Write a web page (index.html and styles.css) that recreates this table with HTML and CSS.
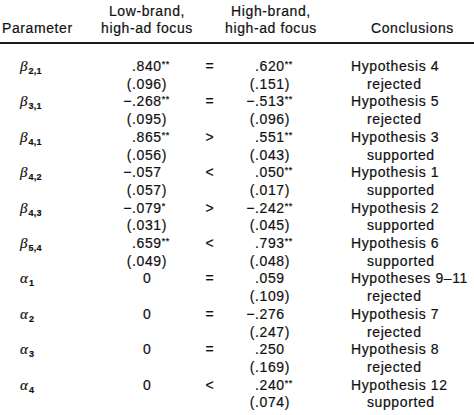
FILE: index.html
```html
<!DOCTYPE html>
<html lang="en">
<head>
<meta charset="utf-8">
<title>Parameter estimates</title>
<link rel="stylesheet" href="styles.css">
</head>
<body>
<table class="tbl">
  <colgroup>
    <col class="c-par"><col class="c-low"><col class="c-sign"><col class="c-high"><col class="c-conc">
  </colgroup>
  <thead>
    <tr>
      <th class="h-par">Parameter</th>
      <th class="h-low">Low-brand,<br>high-ad focus</th>
      <th></th>
      <th class="h-high">High-brand,<br>high-ad focus</th>
      <th class="h-conc">Conclusions</th>
    </tr>
  </thead>
  <tbody>
    <tr>
      <td class="par"><span class="sym">β</span><sub>2,1</sub></td>
      <td class="num lo"><div><span class="pre"></span>.840<sup>**</sup></div><div><span class="pre">(</span>.096)</div></td>
      <td class="sign">=</td>
      <td class="num hi"><div><span class="pre"></span>.620<sup>**</sup></div><div><span class="pre">(</span>.151)</div></td>
      <td class="conc"><div>Hypothesis 4</div><div class="res">rejected</div></td>
    </tr>
    <tr>
      <td class="par"><span class="sym">β</span><sub>3,1</sub></td>
      <td class="num lo"><div><span class="pre">−</span>.268<sup>**</sup></div><div><span class="pre">(</span>.095)</div></td>
      <td class="sign">=</td>
      <td class="num hi"><div><span class="pre">−</span>.513<sup>**</sup></div><div><span class="pre">(</span>.096)</div></td>
      <td class="conc"><div>Hypothesis 5</div><div class="res">rejected</div></td>
    </tr>
    <tr>
      <td class="par"><span class="sym">β</span><sub>4,1</sub></td>
      <td class="num lo"><div><span class="pre"></span>.865<sup>**</sup></div><div><span class="pre">(</span>.056)</div></td>
      <td class="sign">&gt;</td>
      <td class="num hi"><div><span class="pre"></span>.551<sup>**</sup></div><div><span class="pre">(</span>.043)</div></td>
      <td class="conc"><div>Hypothesis 3</div><div class="res">supported</div></td>
    </tr>
    <tr>
      <td class="par"><span class="sym">β</span><sub>4,2</sub></td>
      <td class="num lo"><div><span class="pre">−</span>.057</div><div><span class="pre">(</span>.057)</div></td>
      <td class="sign">&lt;</td>
      <td class="num hi"><div><span class="pre"></span>.050<sup>**</sup></div><div><span class="pre">(</span>.017)</div></td>
      <td class="conc"><div>Hypothesis 1</div><div class="res">supported</div></td>
    </tr>
    <tr>
      <td class="par"><span class="sym">β</span><sub>4,3</sub></td>
      <td class="num lo"><div><span class="pre">−</span>.079<sup>*</sup></div><div><span class="pre">(</span>.031)</div></td>
      <td class="sign">&gt;</td>
      <td class="num hi"><div><span class="pre">−</span>.242<sup>**</sup></div><div><span class="pre">(</span>.045)</div></td>
      <td class="conc"><div>Hypothesis 2</div><div class="res">supported</div></td>
    </tr>
    <tr>
      <td class="par"><span class="sym">β</span><sub>5,4</sub></td>
      <td class="num lo"><div><span class="pre"></span>.659<sup>**</sup></div><div><span class="pre">(</span>.049)</div></td>
      <td class="sign">&lt;</td>
      <td class="num hi"><div><span class="pre"></span>.793<sup>**</sup></div><div><span class="pre">(</span>.048)</div></td>
      <td class="conc"><div>Hypothesis 6</div><div class="res">supported</div></td>
    </tr>
    <tr>
      <td class="par"><span class="sym">α</span><sub>1</sub></td>
      <td class="num zero">0</td>
      <td class="sign">=</td>
      <td class="num hi"><div><span class="pre"></span>.059</div><div><span class="pre">(</span>.109)</div></td>
      <td class="conc"><div>Hypotheses 9–11</div><div class="res">rejected</div></td>
    </tr>
    <tr>
      <td class="par"><span class="sym">α</span><sub>2</sub></td>
      <td class="num zero">0</td>
      <td class="sign">=</td>
      <td class="num hi"><div><span class="pre">−</span>.276</div><div><span class="pre">(</span>.247)</div></td>
      <td class="conc"><div>Hypothesis 7</div><div class="res">rejected</div></td>
    </tr>
    <tr>
      <td class="par"><span class="sym">α</span><sub>3</sub></td>
      <td class="num zero">0</td>
      <td class="sign">=</td>
      <td class="num hi"><div><span class="pre"></span>.250</div><div><span class="pre">(</span>.169)</div></td>
      <td class="conc"><div>Hypothesis 8</div><div class="res">rejected</div></td>
    </tr>
    <tr>
      <td class="par"><span class="sym">α</span><sub>4</sub></td>
      <td class="num zero">0</td>
      <td class="sign">&lt;</td>
      <td class="num hi"><div><span class="pre"></span>.240<sup>**</sup></div><div><span class="pre">(</span>.074)</div></td>
      <td class="conc"><div>Hypothesis 12</div><div class="res">supported</div></td>
    </tr>
  </tbody>
</table>
</body>
</html>
```

FILE: styles.css
```css
html, body {
  margin: 0;
  padding: 0;
  background: #ffffff;
}

body {
  font-family: "Liberation Sans", Arial, sans-serif;
  font-size: 14px;
  letter-spacing: 0.6px;
  color: #111111;
  line-height: 17.7px;
  -webkit-text-stroke: 0.2px #111111;
}

.tbl {
  width: 474px;
  table-layout: fixed;
  border-collapse: collapse;
  border-spacing: 0;
}

.c-par { width: 95px; }
.c-low { width: 100px; }
.c-sign { width: 30px; }
.c-high { width: 98px; }
.c-conc { width: 151px; }

.tbl th,
.tbl td {
  padding: 0;
  vertical-align: top;
  white-space: nowrap;
}

.tbl th {
  font-weight: normal;
  vertical-align: bottom;
  line-height: 17px;
  padding-top: 3px;
  padding-bottom: 5px;
  border-bottom: 2px solid #1a1a1a;
}

.tbl .h-par {
  text-align: left;
  padding-left: 2px;
}

.tbl .h-low {
  text-align: center;
  padding-left: 4px;
}

.tbl .h-high {
  text-align: center;
  padding-right: 6px;
}

.tbl .h-conc {
  text-align: left;
  padding-left: 48px;
}

.tbl tbody tr:first-child td {
  padding-top: 14px;
}

.tbl .par {
  padding-left: 20px;
}

.sym {
  font-family: "Liberation Serif", "Times New Roman", serif;
  font-style: italic;
  font-size: 15px;
  letter-spacing: 0;
}

sub {
  font-family: "Liberation Sans", Arial, sans-serif;
  font-weight: bold;
  font-size: 9px;
  letter-spacing: 0.3px;
  line-height: 0;
  vertical-align: -3px;
  margin-left: 1px;
}

sup {
  font-size: 9px;
  line-height: 0;
  vertical-align: 4px;
  letter-spacing: 0.5px;
}

.pre {
  display: inline-block;
  width: 14px;
  text-align: right;
}

.tbl .lo {
  padding-left: 23px;
}

.tbl .hi {
  padding-left: 16px;
}

.tbl .zero {
  padding-left: 48px;
}

.tbl .sign {
  text-align: center;
}

.tbl .conc {
  padding-left: 28px;
}

.res {
  padding-left: 16px;
}
```
